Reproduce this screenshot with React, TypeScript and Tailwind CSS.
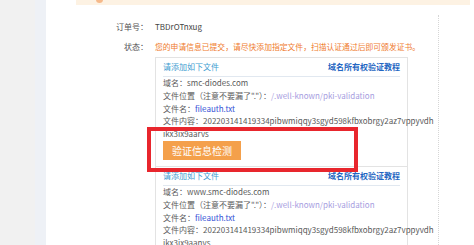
const font = { fontFamily: '"Noto Sans CJK SC", "Noto Sans", sans-serif' };

function FileCard({ domain, tail }: { domain: string; tail: string }) {
  return (
    <div className="border-x border-t border-[#e3e3e3] px-[7px] pb-[6px]">
      <div className="flex h-[19px] items-center justify-between border-b border-[#e1e8f0] text-[8px]">
        <span className="text-[#3c9cd0]">请添加如下文件</span>
        <span className="font-bold text-[#2466c2]">域名所有权验证教程</span>
      </div>
      <div className="text-[8px] leading-[12.8px] text-[#5a5a5a]">
        <div>域名：{domain}</div>
        <div>
          文件位置（注意不要漏了"."）：<span className="text-[#a69ce0]">/.well-known/pki-validation</span>
        </div>
        <div>
          文件名：<span className="text-[#3452d6]">fileauth.txt</span>
        </div>
        <div className="whitespace-nowrap">文件内容：202203141419334pibwmiqqy3sgyd598kfbxobrgy2az7vppyvdh</div>
        <div>{tail}</div>
      </div>
      <button className="flex h-[19px] w-[78px] items-center justify-center bg-[#f4a04b] text-[10px] text-white">
        验证信息检测
      </button>
    </div>
  );
}

export default function App() {
  return (
    <div className="flex h-[245px] w-[474px] overflow-hidden bg-white" style={font}>
      <div className="w-[35px] shrink-0 bg-[#f1f1f1]" />
      <div className="w-[11px] shrink-0 bg-[#eef1f6]" />
      <div className="relative flex-1">
        {/* top notice strip */}
        <div className="relative ml-[30px] h-[5px] w-[394px] overflow-hidden bg-[#fdf2e3]">
          <div className="absolute left-[20px] -top-[4px] h-[7px] w-[7px] rounded-full bg-[#f6b98a]" />
        </div>

        <div className="mt-[10px] w-[393px] border-r border-dotted border-[#d6d6d6] pt-[5px]">
          <div className="flex h-[14px] items-center text-[8px]">
            <span className="w-[102px] text-right text-[#555]">订单号：</span>
            <span className="ml-[7px] text-[#444]">TBDrOTnxug</span>
          </div>
          <div className="mt-[6px] flex text-[8px]">
            <span className="w-[102px] shrink-0 text-right leading-[14px] text-[#555]">状态：</span>
            <div className="ml-[7px] w-[253px]">
              <div className="whitespace-nowrap text-[7.8px] leading-[14px] text-[#ef7b2e]">
                您的申请信息已提交，请尽快添加指定文件，扫描认证通过后即可颁发证书。
              </div>
              <div className="mt-[3px]">
                <FileCard domain="smc-diodes.com" tail="ikx3ix9aarvs" />
                <FileCard domain="www.smc-diodes.com" tail="ikx3ix9aanvs" />
              </div>
            </div>
          </div>
        </div>

        {/* red highlight box */}
        <div className="absolute left-[101px] top-[127px] h-[45px] w-[211px] border-4 border-[#e8262d]" />
      </div>
    </div>
  );
}
